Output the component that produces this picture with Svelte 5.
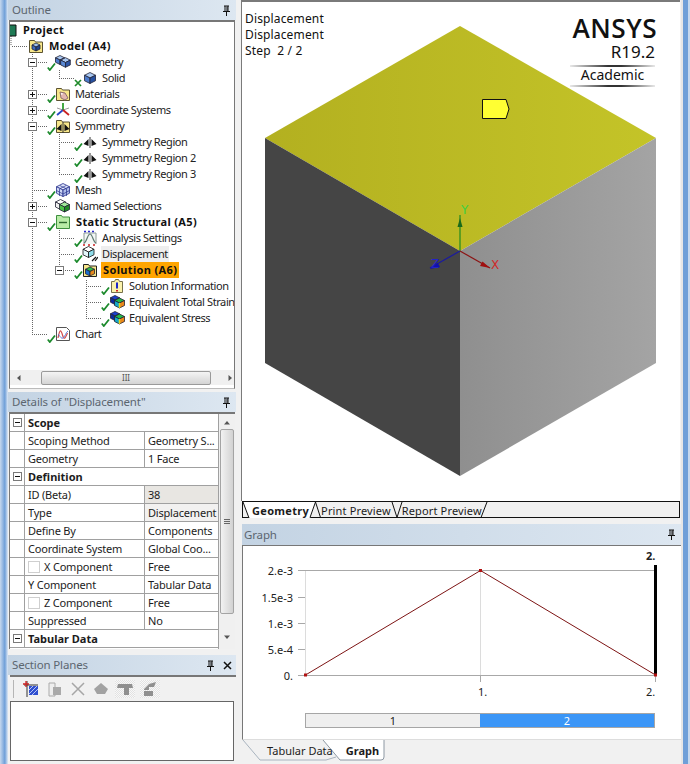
<script>
	const treeRows = [
		{ label: 'Project', x: 8, bold: true, kind: 'root' },
		{ label: 'Model (A4)', x: 18, bold: true, kind: 'model', icon: 'model' },
		{ label: 'Geometry', depth: 1, exp: '-', icon: 'geometry' },
		{ label: 'Solid', depth: 2, icon: 'solid', mark: 'cross' },
		{ label: 'Materials', depth: 1, exp: '+', icon: 'materials' },
		{ label: 'Coordinate Systems', depth: 1, exp: '+', icon: 'coords' },
		{ label: 'Symmetry', depth: 1, exp: '-', icon: 'symfolder' },
		{ label: 'Symmetry Region', depth: 2, icon: 'sym' },
		{ label: 'Symmetry Region 2', depth: 2, icon: 'sym' },
		{ label: 'Symmetry Region 3', depth: 2, icon: 'sym' },
		{ label: 'Mesh', depth: 1, icon: 'mesh' },
		{ label: 'Named Selections', depth: 1, exp: '+', icon: 'named', nomark: true },
		{ label: 'Static Structural (A5)', depth: 1, exp: '-', icon: 'static', bold: true },
		{ label: 'Analysis Settings', depth: 2, icon: 'analysis' },
		{ label: 'Displacement', depth: 2, icon: 'disp', hint: true },
		{ label: 'Solution (A6)', depth: 2, exp: '-', icon: 'solution', bold: true, active: true },
		{ label: 'Solution Information', depth: 3, icon: 'info' },
		{ label: 'Equivalent Total Strain', depth: 3, icon: 'equiv' },
		{ label: 'Equivalent Stress', depth: 3, icon: 'equiv' },
		{ label: 'Chart', depth: 1, icon: 'chart' }
	]

	// vertical dotted guides, in px from the top left of the tree body
	const guides = [
		[22, 32, 314],
		[49, 48, 58],
		[49, 112, 154],
		[49, 208, 250],
		[76, 258, 298]
	]

	const details = [
		{ head: 'Scope' },
		{ name: 'Scoping Method', value: 'Geometry S...' },
		{ name: 'Geometry', value: '1 Face' },
		{ head: 'Definition' },
		{ name: 'ID (Beta)', value: '38', tone: 'ro' },
		{ name: 'Type', value: 'Displacement', tone: 'soft' },
		{ name: 'Define By', value: 'Components' },
		{ name: 'Coordinate System', value: 'Global Coo...' },
		{ name: 'X Component', value: 'Free', box: true },
		{ name: 'Y Component', value: 'Tabular Data' },
		{ name: 'Z Component', value: 'Free', box: true },
		{ name: 'Suppressed', value: 'No' },
		{ head: 'Tabular Data' }
	]

	const yTicks = [
		{ y: 570, label: '2.e-3' },
		{ y: 597, label: '1.5e-3' },
		{ y: 623, label: '1.e-3' },
		{ y: 649, label: '5.e-4' },
		{ y: 675, label: '0.' }
	]

	function cube(cx, cy, r) {
		const h = r / 2
		return {
			top: `${cx},${cy - r} ${cx + r},${cy - h} ${cx},${cy} ${cx - r},${cy - h}`,
			left: `${cx - r},${cy - h} ${cx},${cy} ${cx},${cy + r} ${cx - r},${cy + h}`,
			right: `${cx + r},${cy - h} ${cx},${cy} ${cx},${cy + r} ${cx + r},${cy + h}`
		}
	}
</script>

{#snippet box3d(cx, cy, r, top, left, right, line = '#223')}
	{@const c = cube(cx, cy, r)}
	<g stroke={line} stroke-width="0.8" stroke-linejoin="round">
		<polygon points={c.top} fill={top} />
		<polygon points={c.left} fill={left} />
		<polygon points={c.right} fill={right} />
	</g>
{/snippet}

{#snippet folder(fill = '#f7e68a', line = '#5b5230')}
	<path d="M1.500 2.500h5l1 1.500h7v10.500h-13z" fill={fill} stroke={line} />
{/snippet}

{#snippet symmetry(y)}
	<path d="M1.500 {y + 6}L6.500 {y + 1}V{y + 8}ZM9.500 {y + 1}L14.500 {y + 6}L9.500 {y + 8}Z" fill="#111" />
	<path d="M8 {y - 1}v11" stroke="#333" fill="none" />
{/snippet}

{#snippet icon(name)}
	<svg class="ico" viewBox="0 0 16 16">
		{#if name === 'model'}
			{@render folder()}
			{@render box3d(8, 9, 4, '#9cc0ee', '#3d6cc0', '#20458f')}
		{:else if name === 'geometry'}
			{@render box3d(5, 6, 4.500, '#a9c8f2', '#4d7ccc', '#2d56a6')}
			{@render box3d(10.500, 8.500, 4.800, '#a9c8f2', '#5a8ad6', '#2d56a6')}
		{:else if name === 'solid'}
			{@render box3d(8, 8, 5.500, '#a9c8f2', '#4d7ccc', '#2650a0')}
		{:else if name === 'materials'}
			{@render folder()}
			<path d="M5 6l5 1 3 5-3 2-4-2z" fill="#e3b6b0" stroke="#8d6f6f" />
			<circle cx="6.800" cy="7.800" r="0.900" fill="#fff" />
		{:else if name === 'coords'}
			<path d="M2 6l6 2 6-2" stroke="#9a9a9a" fill="none" />
			<path d="M8 8V1" stroke="#2fa02f" stroke-width="1.800" />
			<path d="M8 8L2 13" stroke="#2747c7" stroke-width="1.800" />
			<path d="M8 8l6 5" stroke="#c92222" stroke-width="1.800" />
		{:else if name === 'symfolder'}
			{@render folder()}
			{@render symmetry(5)}
		{:else if name === 'sym'}
			{@render symmetry(4)}
		{:else if name === 'mesh'}
			{@render box3d(8, 8, 6.500, '#dfe6fa', '#cfd8f5', '#aebcea', '#27308c')}
			<path d="M4.800 3.500l6.500 3.200M11.200 3.500L4.800 6.700M4.500 7v7M11.500 7v7M1.500 8.500L8 12M14.500 8.500L8 12" stroke="#27308c" stroke-width="0.700" fill="none" />
		{:else if name === 'named'}
			{@render box3d(5.500, 6.500, 5, '#fff', '#f0f0f0', '#ddd')}
			{@render box3d(9.500, 9, 5, '#9fe79a', '#4cc34a', '#1e8a26')}
		{:else if name === 'static'}
			<path d="M1.500 1.500h5l1 1.500h7v11.500h-13z" fill="#b8eca6" stroke="#3e8f3e" />
			<path d="M4 8.500h8" stroke="#2e6a2e" stroke-width="1.400" />
		{:else if name === 'analysis'}
			<path d="M2 14V3h12v11" fill="#f3f7f5" stroke="#8a9a95" />
			<path d="M2 13c3-1 3.500-9 6-9s3 8 6 9" fill="none" stroke="#5f7a72" stroke-width="1.200" />
			<path d="M2 1.500h12" stroke="#2a2ac8" stroke-width="1.500" stroke-dasharray="2 2" />
			<path d="M1 15h14" stroke="#c22" stroke-width="1.500" stroke-dasharray="2 3" />
		{:else if name === 'disp'}
			{@render box3d(6.500, 6, 5.500, '#fff', '#e3f6fa', '#8fdcea', '#111')}
			<path d="M10 15l4-4M13 15l3-4" stroke="#111" stroke-width="1.200" />
		{:else if name === 'solution'}
			<path d="M1.500 2.500h5l1 1.500h7v10.500h-13z" fill="#f7e68a" stroke="#222" />
			{@render box3d(8, 9.500, 4.500, '#2fc04a', '#1b6fd0', '#e88a1a')}
		{:else if name === 'info'}
			<path d="M2.500 14.500V3.500h3l1-2h3l1 2h3v11z" fill="#fbf2ac" stroke="#77714a" />
			<path d="M8 4.500v6" stroke="#1d27c8" stroke-width="2" />
			<path d="M8 12v1.500" stroke="#c22" stroke-width="2" />
		{:else if name === 'equiv'}
			{@render box3d(6, 6, 4.500, '#1b3fcf', '#0c2a9d', '#0f7fd4')}
			{@render box3d(10.500, 9, 5, '#22b84a', '#14a6c9', '#e8871a')}
			<path d="M10.500 9v5" stroke="#e4d31c" stroke-width="1.500" />
		{:else if name === 'chart'}
			<path d="M1.500 1.500h10l3 3v10h-13z" fill="#fff" stroke="#555" />
			<path d="M3 12c2-10 3-8 4.500-3s2.500 4 5-2" fill="none" stroke="#d34a4a" stroke-width="1.200" />
			<path d="M3 8c2 2 3 5 5 4s3-6 5-7" fill="none" stroke="#5f78d8" />
		{/if}
	</svg>
{/snippet}

{#snippet mark(kind)}
	<svg class="mark" viewBox="0 0 9 9">
		{#if kind === 'cross'}
			<path d="M1 2l6 6M7 2L1 8" stroke="#1f8a2a" stroke-width="1.700" fill="none" />
		{:else}
			<path d="M.8 5.500l2 2.500L8 1.500" stroke="#1c8a2c" stroke-width="1.800" fill="none" />
		{/if}
	</svg>
{/snippet}

{#snippet pin()}
	<svg class="pin" viewBox="0 0 9 11">
		<path d="M2 1h5M3 1v5M6 1v5M1 6.500h7M4.500 7v4" stroke="#111" fill="none" />
		<path d="M5 1.500v4.500" stroke="#111" />
	</svg>
{/snippet}

{#snippet arrow(dir)}
	<svg class="arrow" viewBox="0 0 8 8">
		{#if dir === 'left'}
			<path d="M5.500 1v6L2 4z" fill="#555" />
		{:else if dir === 'right'}
			<path d="M2.500 1v6L6 4z" fill="#555" />
		{:else if dir === 'up'}
			<path d="M1 5.500h6L4 2z" fill="#555" />
		{:else}
			<path d="M1 2.500h6L4 6z" fill="#555" />
		{/if}
	</svg>
{/snippet}

<div class="app">
	<div class="edge left"></div>

	<aside class="side">
		<header class="title">Outline {@render pin()}</header>
		<section class="tree-frame">
			<div class="tree">
				<svg class="guides" width="225" height="330">
					<path d="M1 12V24" class="dots" />
					{#each guides as [x, y1, y2]}
						<path d="M{x + .5} {y1}V{y2}" class="dots" />
					{/each}
				</svg>
				{#each treeRows as row}
					{#if row.kind === 'root'}
						<div class="row" style="padding-left: {row.x}px">
							<svg class="stubicon" viewBox="0 0 7 13"><path d="M0 1h6v11H0" fill="#1f7a55" stroke="#111" /></svg>
							<span class="label bold">{row.label}</span>
						</div>
					{:else if row.kind === 'model'}
						<div class="row" style="padding-left: {row.x}px">
							<span class="lead-dots"></span>
							{@render icon(row.icon)}
							<span class="label bold">{row.label}</span>
						</div>
					{:else}
						<div class="row" style="padding-left: {18 + 27 * (row.depth - 1)}px">
							<span class="stub">
								{#if row.exp}
									<span class="exp">
										<i></i>
										{#if row.exp === '+'}<b></b>{/if}
									</span>
								{/if}
							</span>
							<span class="markcell">
								{#if !row.nomark}{@render mark(row.mark)}{/if}
							</span>
							{@render icon(row.icon)}
							<span class="label" class:bold={row.bold} class:active={row.active} class:hint={row.hint}>{row.label}</span>
						</div>
					{/if}
				{/each}
			</div>
			<div class="hscroll">
				{@render arrow('left')}
				<div class="thumb-h">III</div>
				{@render arrow('right')}
			</div>
		</section>

		<header class="title details-title">Details of "Displacement" {@render pin()}</header>
		<section class="details-frame">
			<div class="table">
				{#each details as d}
					{#if d.head}
						<div class="trow">
							<span class="tog"><span class="exp"><i></i></span></span>
							<span class="head">{d.head}</span>
						</div>
					{:else}
						<div class="trow">
							<span class="tog"></span>
							<span class="name">
								{#if d.box}<span class="check"></span>{/if}
								{d.name}
							</span>
							<span class="val {d.tone || ''}">{d.value}</span>
						</div>
					{/if}
				{/each}
			</div>
			<div class="vscroll">
				{@render arrow('up')}
				<div class="thumb-v"><i></i><i></i><i></i></div>
				{@render arrow('down')}
			</div>
		</section>

		<header class="title section-title">
			Section Planes
			<span class="title-tools">{@render pin()}<svg class="close" viewBox="0 0 9 9"><path d="M1 1l7 7M8 1L1 8" stroke="#111" stroke-width="1.500" /></svg></span>
		</header>
		<div class="toolbar">
			<span class="sep"></span>
			<svg class="tool first" viewBox="0 0 18 18">
				<path d="M2 5h14M5 1v16" stroke="#333" />
				<rect x="7" y="6" width="9" height="9" fill="#2f4fd0" />
				<path d="M7 14l8-8M10 15l6-6M7 10l4-4" stroke="#b7c6f5" />
				<path d="M1 4h6M4 1v6" stroke="#c22" stroke-width="1.300" />
			</svg>
			<svg class="tool" viewBox="0 0 18 18">
				<path d="M3 3h6v13H3z" fill="#eee" stroke="#aaa" />
				<path d="M7 7h8v8H7z" fill="#aaa" />
			</svg>
			<svg class="tool" viewBox="0 0 18 18"><path d="M3 3l12 12M15 3L3 15" stroke="#a6a6a6" stroke-width="1.500" /></svg>
			<svg class="tool" viewBox="0 0 18 18"><path d="M9 3l7 6-3 5H5L2 9z" fill="#a2a2a2" /></svg>
			<svg class="tool dither" viewBox="0 0 18 18"><path d="M2 4h14l1 4h-4v7H8V8H1z" fill="#8f8f8f" /></svg>
			<svg class="tool dither" viewBox="0 0 18 18"><path d="M3 9l5-5 7-2-2 5H8v3H3zM3 11h9v5H3z" fill="#8f8f8f" /></svg>
		</div>
		<div class="section-box"></div>
	</aside>

	<div class="sash"></div>

	<main class="main">
		<section class="viewport">
			<svg class="scene" viewBox="242 2 438 498">
				<defs>
					<linearGradient id="topface" x1="0" x2="1" y1="0" y2="0">
						<stop offset="0" stop-color="#b3b020" />
						<stop offset="1" stop-color="#c4c428" />
					</linearGradient>
					<linearGradient id="rightface" x1="0" x2="1" y1="0" y2="0">
						<stop offset="0" stop-color="#8f8f8f" />
						<stop offset="1" stop-color="#a4a4a4" />
					</linearGradient>
				</defs>
				<polygon points="460,26 656,138 460,251 265,138" fill="url(#topface)" />
				<polygon points="265,138 460,251 460,476 265,363" fill="#454545" />
				<polygon points="460,251 656,138 656,363 460,476" fill="url(#rightface)" />
				<polygon points="482.500,99.500 506,99.500 509,109 506,118.500 482.500,118.500" fill="#ffff33" stroke="#111" />

				<path d="M460 251V215" stroke="#1f8a1f" stroke-width="1.200" />
				<path d="M460 218l-2.500 9h5z" fill="#1a6a1a" />
				<path d="M460 251l-30 17" stroke="#1a1aa0" stroke-width="1.200" />
				<path d="M430 269l10-2-2.500-4.500z" fill="#1010b0" />
				<path d="M460 251l30 17" stroke="#8c1414" stroke-width="1.200" />
				<path d="M490 268l-10-2 2.500-4.500z" fill="#a01010" />
				<text class="axis" x="461" y="214" fill="#3fd03f">Y</text>
				<text class="axis" x="431" y="268" fill="#2222c8">Z</text>
				<text class="axis" x="491" y="269" fill="#d02a2a">X</text>
			</svg>
			<div class="caption">
				<div>Displacement</div>
				<div>Displacement</div>
				<div>Step&nbsp; 2 / 2</div>
			</div>
			<div class="brand">
				<div class="brand-name">ANSYS</div>
				<div class="brand-rel">R19.2</div>
				<div class="brand-ed">Academic</div>
			</div>
		</section>

		<nav class="viewtabs">
			<svg class="tabshape" width="438" height="16" viewBox="243 502 438 16">
				<polygon points="243,502 316,502 310,518 249,518" fill="#fff" />
				<path d="M243 502l6 16M310 517.500l5.500-15.500 5 15.500M392 502l5 15.500M397 517.500l5-15.500M481 517.500l6-15.500" stroke="#111" fill="none" />
			</svg>
			<span class="vt on">Geometry</span>
			<span class="vt">Print Preview</span>
			<span class="vt">Report Preview</span>
		</nav>

		<header class="title graph-title">Graph {@render pin()}</header>
		<section class="graph">
			<svg class="chart" viewBox="243 546 438 162">
				<path d="M305.500 570V675M480.500 570V682M655.500 570V682" stroke="#dcdcdc" />
				<path d="M298 570.500H655M298 675.500H655" stroke="#a8a8a8" />
				{#each yTicks as t}
					<path d="M298 {t.y + .5}h7" stroke="#a8a8a8" />
					<text class="tick" x="293" y={t.y + 5} text-anchor="end">{t.label}</text>
				{/each}
				<path d="M480.500 676v6M655.500 676v6" stroke="#a8a8a8" />
				<path d="M655.500 565V675" stroke="#000" stroke-width="3" />
				<path d="M305.500 675L480.500 570.500L655.500 675" stroke="#7d1414" fill="none" />
				<rect x="304" y="673.500" width="3" height="3" fill="#b01010" />
				<rect x="479" y="569" width="3" height="3" fill="#b01010" />
				<rect x="654" y="673.500" width="3" height="3" fill="#b01010" />
				<text class="tick" x="478" y="696">1.</text>
				<text class="tick" x="646" y="696">2.</text>
				<text class="tick strong" x="646" y="560">2.</text>
			</svg>
			<div class="steps">
				<span class="step">1</span>
				<span class="step current">2</span>
			</div>
		</section>
		<nav class="graphtabs">
			<svg class="tabshape" width="160" height="23" viewBox="241 741 160 23">
				<path d="M243 741l17 20h66l10-3" stroke="#a9b4bf" fill="none" />
				<path d="M323 741l17 20h41q3 0 3-3V741" stroke="#8d98a3" fill="#fff" />
			</svg>
			<span class="gt">Tabular Data</span>
			<span class="gt on">Graph</span>
		</nav>
	</main>

	<div class="edge right"></div>
</div>

<style>
	:global(body) {
		margin: 0;
		background: #f1f1f1;
	}
	.app {
		width: 690px;
		height: 764px;
		display: flex;
		overflow: hidden;
		background: #f1f1f1;
		color: #1c1c1c;
		font: 11px/16px "Noto Sans", "DejaVu Sans", sans-serif;
	}
	.edge {
		flex: none;
		background: linear-gradient(90deg, #c6d8ee 0, #6f9fd8 60%, #dfe9f5 100%);
	}
	.edge.left {
		width: 8px;
	}
	.edge.right {
		width: 9px;
		background: linear-gradient(90deg, #e6e6e6 0 2px, #6f9fd8 2px 7px, #c6d8ee 7px);
	}
	.side {
		flex: none;
		width: 228px;
		display: flex;
		flex-direction: column;
	}
	.sash {
		flex: none;
		width: 5px;
	}
	.main {
		flex: none;
		width: 440px;
		display: flex;
		flex-direction: column;
	}

	.title {
		flex: none;
		height: 20px;
		box-sizing: border-box;
		display: flex;
		align-items: center;
		justify-content: space-between;
		padding: 0 4px;
		color: #5c6670;
		font-size: 11.5px;
		letter-spacing: -0.15px;
		background: linear-gradient(90deg, #c3d3e3, #dde7f1);
	}
	.details-title {
		margin-top: 3px;
	}
	.section-title {
		margin-top: 6px;
		height: 20px;
	}
	.graph-title {
		margin-top: 6px;
		height: 21px;
		margin-left: 1px;
		padding-left: 2px;
	}
	.pin {
		width: 9px;
		height: 11px;
		margin-right: 1px;
	}
	.title-tools {
		display: flex;
		align-items: center;
		gap: 7px;
	}
	.close {
		width: 9px;
		height: 9px;
	}

	.tree-frame {
		flex: none;
		height: 369px;
		box-sizing: border-box;
		margin-left: 1px;
		width: 226px;
		border: 1px solid #777;
		border-top-width: 2px;
		border-bottom-color: #bbb;
		background: #fff;
		display: flex;
		flex-direction: column;
		overflow: hidden;
	}
	.tree {
		position: relative;
		height: 348px;
		overflow: hidden;
	}
	.guides {
		position: absolute;
		left: 0;
		top: 0;
	}
	.dots {
		stroke: #666;
		stroke-dasharray: 1 1;
		fill: none;
	}
	.row {
		position: relative;
		display: flex;
		align-items: center;
		height: 16px;
		white-space: nowrap;
		letter-spacing: -0.4px;
	}
	.stubicon {
		position: absolute;
		left: 0;
		top: 2px;
		width: 7px;
		height: 13px;
	}
	.lead-dots {
		position: absolute;
		left: 2px;
		top: 8px;
		width: 15px;
		border-top: 1px dotted #666;
	}
	.stub {
		position: relative;
		flex: none;
		width: 19px;
		height: 16px;
	}
	.stub::before {
		content: '';
		position: absolute;
		left: 4px;
		right: 0;
		top: 8px;
		border-top: 1px dotted #666;
	}
	.exp {
		position: absolute;
		left: 0;
		top: 4px;
		width: 9px;
		height: 9px;
		box-sizing: border-box;
		border: 1px solid #7a7a7a;
		background: #fff;
	}
	.exp i {
		position: absolute;
		left: 1px;
		top: 3px;
		width: 5px;
		height: 1px;
		background: #111;
	}
	.exp b {
		position: absolute;
		left: 3px;
		top: 1px;
		width: 1px;
		height: 5px;
		background: #111;
	}
	.markcell {
		flex: none;
		width: 8px;
		height: 16px;
		position: relative;
	}
	.mark {
		position: absolute;
		left: 0;
		top: 8px;
		width: 9px;
		height: 9px;
	}
	.ico {
		flex: none;
		width: 16px;
		height: 16px;
	}
	.label {
		margin-left: 4px;
		color: #222;
	}
	.bold {
		font-weight: 700;
		color: #111;
		margin-left: 5px;
		letter-spacing: 0.35px;
	}
	.hint {
		background: #eeeeee;
		margin-left: 3px;
		padding: 0 1px;
	}
	.active {
		background: #ffa500;
		margin-left: 3px;
		padding: 0 2px;
		line-height: 16px;
	}

	.hscroll {
		flex: none;
		height: 15px;
		padding: 0 5px;
		display: flex;
		align-items: center;
		gap: 0;
		background: #f0f0f0;
	}
	.arrow {
		flex: none;
		width: 8px;
		height: 8px;
	}
	.thumb-h {
		flex: none;
		width: 170px;
		height: 14px;
		box-sizing: border-box;
		margin: 0 15px 0 18px;
		border: 1px solid #9a9a9a;
		border-radius: 2px;
		background: linear-gradient(#f4f4f4, #d4d4d4);
		text-align: center;
		font-size: 8px;
		line-height: 12px;
		color: #555;
	}

	.details-frame {
		flex: none;
		height: 237px;
		box-sizing: border-box;
		margin-left: 1px;
		width: 226px;
		border-top: 2px solid #777;
		border-left: 1px solid #777;
		display: flex;
		background: #fff;
	}
	.table {
		flex: none;
		width: 208px;
		border-right: 1px solid #a0a0a0;
		letter-spacing: -0.2px;
	}
	.trow {
		display: flex;
		height: 18px;
		box-sizing: border-box;
		line-height: 17px;
		border-bottom: 1px solid #a0a0a0;
		white-space: nowrap;
	}
	.tog {
		position: relative;
		flex: none;
		width: 14px;
		border-right: 1px solid #a0a0a0;
	}
	.tog .exp {
		left: 3px;
		top: 4px;
	}
	.head {
		padding-left: 3px;
		font-weight: 700;
		letter-spacing: 0;
	}
	.name {
		flex: none;
		width: 120px;
		box-sizing: border-box;
		padding-left: 3px;
		border-right: 1px solid #a0a0a0;
		display: flex;
		align-items: center;
		gap: 4px;
	}
	.val {
		flex: 1;
		padding-left: 3px;
		overflow: hidden;
	}
	.val.ro {
		background: #e8e6e2;
	}
	.val.soft {
		background: #f2f1f0;
	}
	.check {
		width: 12px;
		height: 12px;
		box-sizing: border-box;
		border: 1px solid #cfcfcf;
		flex: none;
	}
	.vscroll {
		flex: 1;
		display: flex;
		flex-direction: column;
		align-items: center;
		background: #f0f0f0;
		padding-top: 5px;
		height: 235px;
		box-sizing: border-box;
	}
	.thumb-v {
		flex: none;
		width: 14px;
		height: 185px;
		margin: 2px 0 19px;
		box-sizing: border-box;
		border: 1px solid #a4a4a4;
		border-radius: 2px;
		background: linear-gradient(90deg, #f2f2f2, #d2d2d2);
		display: flex;
		flex-direction: column;
		justify-content: center;
		align-items: center;
		gap: 1px;
	}
	.thumb-v i {
		width: 6px;
		height: 1px;
		background: #666;
	}

	.toolbar {
		flex: none;
		height: 26px;
		display: flex;
		align-items: center;
		margin-left: 2px;
		gap: 5px;
		border-top: 2px solid #777;
		box-sizing: border-box;
	}
	.sep {
		width: 1px;
		height: 18px;
		background: #b5b5b5;
		margin-left: 3px;
	}
	.tool {
		flex: none;
		width: 18px;
		height: 18px;
	}
	.tool.first {
		margin-left: 3px;
		margin-right: 1px;
	}
	.tool.dither {
		width: 20px;
		background: repeating-conic-gradient(#e2e2e2 0 25%, #f8f8f8 0 50%) 0 0 / 2px 2px;
	}
	.section-box {
		flex: none;
		height: 60px;
		margin-left: 2px;
		width: 224px;
		box-sizing: border-box;
		border: 1px solid #666;
		background: #fff;
	}

	.viewport {
		position: relative;
		flex: none;
		height: 501px;
		box-sizing: border-box;
		border-top: 2px solid #7a7a7a;
		border-left: 1px solid #7a7a7a;
		background: #fff;
		width: 439px;
	}
	.scene {
		display: block;
		width: 438px;
		height: 498px;
	}
	.axis {
		font-size: 12px;
		font-family: "DejaVu Sans", sans-serif;
	}
	.caption {
		position: absolute;
		left: 3px;
		top: 9px;
		font-size: 12px;
		letter-spacing: 0.15px;
		color: #111;
	}
	.brand {
		position: absolute;
		right: 25px;
		top: 12px;
		width: 85px;
		text-align: right;
		color: #111;
	}
	.brand-name {
		font: 600 27px/28px "Open Sans", sans-serif;
		letter-spacing: 0.5px;
		transform: scaleX(0.97);
		transform-origin: right;
		white-space: nowrap;
	}
	.brand-rel {
		font-size: 17px;
		line-height: 18px;
		margin-top: 1px;
	}
	.brand-ed {
		margin-top: 4px;
		height: 22px;
		box-sizing: border-box;
		text-align: center;
		font-size: 14px;
		line-height: 16px;
		border-top: 2px solid transparent;
		border-bottom: 2px solid transparent;
		border-image: linear-gradient(90deg, #eee, #333 45%, #333 60%, #eee) 1;
	}

	.viewtabs {
		position: relative;
		flex: none;
		height: 17px;
		width: 438px;
		margin-left: 1px;
		box-sizing: border-box;
		border: 1px solid #111;
		background: #f0f0f0;
		display: flex;
		line-height: 17px;
		letter-spacing: 0.15px;
	}
	.tabshape {
		position: absolute;
		left: 0;
		top: 0;
	}
	.vt {
		position: relative;
		font-size: 11px;
	}
	.vt:nth-of-type(1) {
		margin-left: 9px;
	}
	.vt:nth-of-type(2) {
		margin-left: 12px;
	}
	.vt:nth-of-type(3) {
		margin-left: 11px;
	}
	.vt.on {
		font-weight: 700;
		letter-spacing: 0.3px;
	}

	.graph {
		flex: none;
		height: 195px;
		box-sizing: border-box;
		margin-left: 1px;
		width: 439px;
		border-top: 1px solid #777;
		border-left: 1px solid #777;
		border-bottom: 1px solid #ddd;
		background: #fff;
	}
	.chart {
		display: block;
		width: 438px;
		height: 162px;
	}
	.tick {
		font: 11px "Noto Sans", sans-serif;
		fill: #222;
	}
	.tick.strong {
		font-weight: 700;
	}
	.steps {
		display: flex;
		margin: 5px 0 0 62px;
		width: 350px;
		height: 15px;
		box-sizing: border-box;
		border: 1px solid #a6a6a6;
		line-height: 13px;
		text-align: center;
	}
	.step {
		flex: 1;
		background: #efefef;
	}
	.step.current {
		background: #3b96f7;
		color: #fff;
	}
	.graphtabs {
		position: relative;
		flex: 1;
		display: flex;
		padding-left: 26px;
		line-height: 21px;
	}
	.gt {
		position: relative;
		white-space: nowrap;
	}
	.gt.on {
		margin-left: 13px;
		font-weight: 700;
	}
</style>
